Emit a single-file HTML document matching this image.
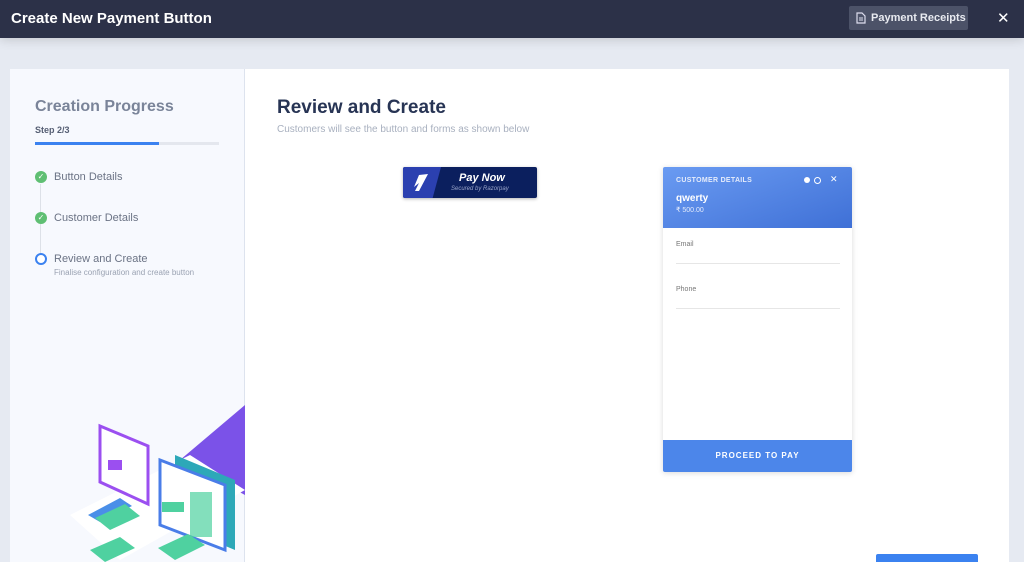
<!DOCTYPE html><html><head><style>
*{box-sizing:border-box;margin:0;padding:0}
body{width:1024px;height:562px;overflow:hidden;background:#e6eaf2;font-family:"Liberation Sans",sans-serif;position:relative}
.top{position:absolute;left:0;top:0;width:1024px;height:38px;background:#2c3148;color:#fff;box-shadow:0 2px 10px rgba(0,0,0,.15)}
.abs{position:absolute;white-space:nowrap}
</style></head><body>
<div class="top">
<div class="abs" style="left:11px;top:10px;font-size:15px;font-weight:bold">Create New Payment Button</div>
<div class="abs" style="left:849px;top:6px;width:119px;height:24px;background:#4c5268;border-radius:2px;font-size:11px;font-weight:bold;color:#e8eaf0;padding:6px 0 0 22px">Payment Receipts</div>
<svg class="abs" style="left:856px;top:12px" width="10" height="12"><path d="M1 1h5l3 3v7H1z" fill="none" stroke="#dde" stroke-width="1.2"/><path d="M3 6h4M3 8h4" stroke="#dde"/></svg>
<div class="abs" style="left:997px;top:9px;font-size:15px;color:#fff">✕</div>
</div>
<div class="abs" style="left:10px;top:69px;width:235px;height:493px;background:#f7f9fe;border-right:1px solid #dde3ee"></div>
<div class="abs" style="left:245px;top:69px;width:764px;height:493px;background:#fff"></div>
<div class="abs" style="left:35px;top:98px;font-size:16px;color:#7a8499;font-weight:bold">Creation Progress</div>
<div class="abs" style="left:35px;top:125px;font-size:9px;color:#555e73;font-weight:bold">Step 2/3</div>
<div class="abs" style="left:35px;top:142px;width:184px;height:3px;background:#e4e7ee"></div>
<div class="abs" style="left:35px;top:142px;width:124px;height:3px;background:#3b82f0"></div>
<div class="abs" style="left:40px;top:184px;width:1px;height:72px;background:#dde1e8"></div>
<div class="abs" style="left:35px;top:171px;width:12px;height:12px;border-radius:50%;background:#5fbf73;color:#fff;font-size:8px;text-align:center;line-height:12px">✓</div>
<div class="abs" style="left:35px;top:212px;width:12px;height:12px;border-radius:50%;background:#5fbf73;color:#fff;font-size:8px;text-align:center;line-height:12px">✓</div>
<div class="abs" style="left:35px;top:253px;width:12px;height:12px;border-radius:50%;border:2px solid #3b82f0;background:#fff"></div>
<div class="abs" style="left:54px;top:171px;font-size:11px;color:#6b7385">Button Details</div>
<div class="abs" style="left:54px;top:212px;font-size:11px;color:#6b7385">Customer Details</div>
<div class="abs" style="left:54px;top:253px;font-size:11px;color:#6b7385">Review and Create</div>
<div class="abs" style="left:54px;top:268px;font-size:8px;color:#9aa2b2">Finalise configuration and create button</div>
<svg class="abs" style="left:60px;top:400px" width="185" height="162">
<polygon points="185,5 185,95 120,60" fill="#7b52e8"/>
<polygon points="10,115 130,55 185,90 60,160" fill="#fff"/>
<polygon points="28,115 60,98 72,106 40,122" fill="#4a8fe8"/>
<polygon points="40,26 88,46 88,104 40,82" fill="#fff" stroke="#9b4ff0" stroke-width="3"/>
<rect x="48" y="60" width="14" height="10" fill="#9b4ff0"/>
<polygon points="115,55 175,80 175,150 115,125" fill="#2da8b8"/>
<polygon points="100,60 165,85 165,150 100,125" fill="#fff" stroke="#4a7de8" stroke-width="3"/>
<rect x="102" y="102" width="22" height="10" fill="#4fd1a0"/>
<rect x="130" y="92" width="22" height="45" fill="#4fd1a0" opacity=".7"/>
<polygon points="35,118 65,104 80,116 50,130" fill="#4fd1a0"/>
<polygon points="30,150 60,137 75,148 45,162" fill="#4fd1a0"/>
<polygon points="98,148 128,134 145,145 115,160" fill="#4fd1a0"/>
</svg>
<div class="abs" style="left:277px;top:97px;font-size:19px;font-weight:bold;color:#273454">Review and Create</div>
<div class="abs" style="left:277px;top:124px;font-size:10px;color:#a8b0bf">Customers will see the button and forms as shown below</div>
<div class="abs" style="left:403px;top:167px;width:134px;height:31px;background:#0b1f5e;border-radius:2px;box-shadow:0 1px 3px rgba(0,0,0,.3);overflow:hidden">
<div class="abs" style="left:0;top:0;width:38px;height:31px;background:#2b40b0;clip-path:polygon(0 0,100% 0,78% 100%,0 100%)"></div>
<svg class="abs" style="left:10px;top:7px" width="16" height="17"><path d="M6 1l9-1-9 17h-4l4-8-5 4z" fill="#fff"/></svg>
<div class="abs" style="left:56px;top:5px;font-size:11px;font-style:italic;font-weight:bold;color:#fff">Pay Now</div>
<div class="abs" style="left:48px;top:19px;font-size:6px;font-style:italic;color:#99a4c8">Secured by Razorpay</div>
</div>
<div class="abs" style="left:663px;top:167px;width:189px;height:305px;background:#fff;box-shadow:0 1px 6px rgba(0,0,0,.15);border-radius:2px;overflow:hidden">
<div style="height:61px;background:linear-gradient(160deg,#6a9bf2,#3f70d6);color:#fff;position:relative">
<div class="abs" style="left:13px;top:10px;font-size:7px;font-weight:bold;letter-spacing:.3px;color:#e5ecfb">CUSTOMER DETAILS</div>
<div class="abs" style="left:141px;top:10px;width:6px;height:6px;border-radius:50%;background:#fff"></div>
<div class="abs" style="left:151px;top:10px;width:7px;height:7px;border-radius:50%;border:1px solid #fff"></div>
<div class="abs" style="left:167px;top:7px;font-size:9px">✕</div>
<div class="abs" style="left:13px;top:26px;font-size:10px;font-weight:bold">qwerty</div>
<div class="abs" style="left:13px;top:39px;font-size:7px;color:#e5ecfb">₹ 500.00</div>
</div>
<div class="abs" style="left:13px;top:74px;font-size:7px;color:#777">Email</div>
<div class="abs" style="left:13px;top:96px;width:164px;height:1px;background:#e6e6e6"></div>
<div class="abs" style="left:13px;top:119px;font-size:7px;color:#777">Phone</div>
<div class="abs" style="left:13px;top:141px;width:164px;height:1px;background:#e6e6e6"></div>
<div class="abs" style="left:0;top:273px;width:189px;height:32px;background:#4c86ea;color:#fff;font-size:8px;font-weight:bold;letter-spacing:1px;text-align:center;line-height:32px">PROCEED TO PAY</div>
</div>
<div class="abs" style="left:876px;top:554px;width:102px;height:8px;background:#3b82f0;border-radius:2px 2px 0 0"></div>
</body></html>
